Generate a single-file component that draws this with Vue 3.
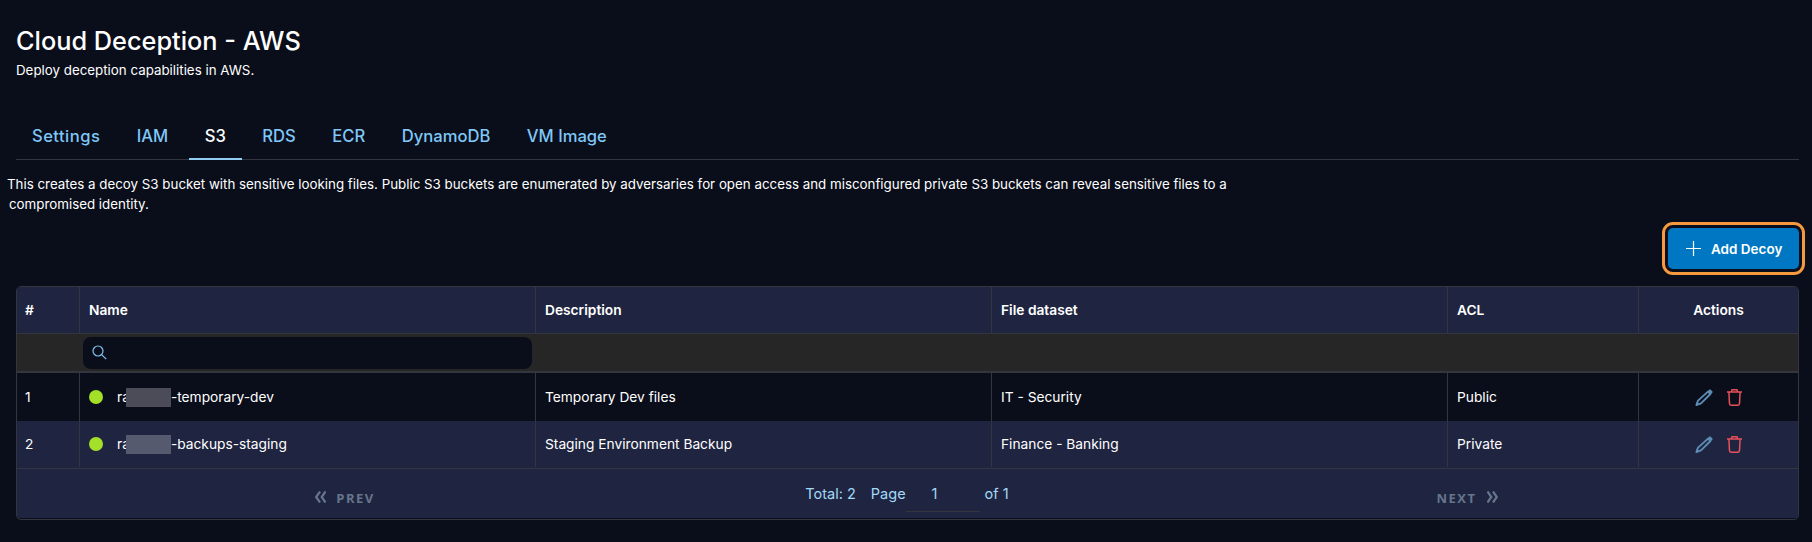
<script setup>
const tabs = ['Settings', 'IAM', 'S3', 'RDS', 'ECR', 'DynamoDB', 'VM Image']
const headers = ['#', 'Name', 'Description', 'File dataset', 'ACL', 'Actions']
const rows = [
  { id: 1, pre: 'ra', name: '-temporary-dev', desc: 'Temporary Dev files', data: 'IT - Security', acl: 'Public' },
  { id: 2, pre: 'ra', name: '-backups-staging', desc: 'Staging Environment Backup', data: 'Finance - Banking', acl: 'Private' }
]
</script>

<template>
  <div class="page">
    <header class="head">
      <h1>Cloud Deception - AWS</h1>
      <p>Deploy deception capabilities in AWS.</p>
    </header>
    <nav class="tabs">
      <a v-for="t in tabs" :key="t" class="tab" :class="{ active: t === 'S3' }">{{ t }}</a>
    </nav>
    <p class="intro">This creates a decoy S3 bucket with sensitive looking files. Public S3 buckets are enumerated by adversaries for open access and misconfigured private S3 buckets can reveal sensitive files to a<br><span class="indent">compromised identity.</span></p>
    <div class="toolbar">
      <button class="add">
        <svg width="15" height="15" viewBox="0 0 15 15" fill="none" stroke="#fff" stroke-width="1.2"><path d="M7.5 0v15M0 7.5h15"/></svg>
        <span>Add Decoy</span>
      </button>
    </div>
    <section class="table">
      <div class="row hrow">
        <div v-for="h in headers" :key="h" class="cell th" :class="{ center: h === 'Actions' }">{{ h }}</div>
      </div>
      <div class="row frow">
        <div class="cell blank"></div>
        <div class="cell fcell">
          <div class="search">
            <svg width="15" height="15" viewBox="0 0 15 15" fill="none" stroke="#7ec4f0" stroke-width="1.2"><circle cx="6" cy="6" r="5"/><path d="M9.6 9.6 14.2 14.2"/></svg>
          </div>
        </div>
        <div class="cell blank wide"></div>
      </div>
      <div v-for="r in rows" :key="r.id" class="row drow" :class="{ alt: r.id === 2 }">
        <div class="cell">{{ r.id }}</div>
        <div class="cell namecell">
          <i class="dot"></i>
          <span>{{ r.pre }}<b class="redact"></b>{{ r.name }}</span>
        </div>
        <div class="cell">{{ r.desc }}</div>
        <div class="cell">{{ r.data }}</div>
        <div class="cell">{{ r.acl }}</div>
        <div class="cell actions">
          <svg width="18" height="17" viewBox="0 0 18 17" fill="none"><path d="M13 2.6 15.4 5 6 14.4 1.4 16 3 11.600Z" stroke="#5d8cb3" stroke-width="1.9" stroke-linejoin="round"/><path d="M12.4 2.6 13.9.9c.6-.6 1.4-.6 2 0l1.2 1.200c.6.6.6 1.300 0 1.900L15.400 5.600Z" fill="#5d8cb3"/><path d="M.8 16.400 1.800 13l2.400 2.400Z" fill="#5d8cb3"/></svg>
          <svg width="15" height="17" viewBox="0 0 15 17" fill="none" stroke="#e8505a" stroke-width="1.5" stroke-linejoin="round"><path d="M0 3h15"/><path d="M4.600 3V1.800c0-.6.5-1.100 1.100-1.100h3.600c.6 0 1.100.5 1.100 1.100V3"/><path d="M1.900 3 2.500 14.600c0 .9.7 1.600 1.600 1.600h6.800c.9 0 1.600-.7 1.600-1.600L13.100 3"/></svg>
        </div>
      </div>
      <footer class="foot">
        <div class="nav">
          <svg width="11" height="12" viewBox="0 0 11 12" fill="none" stroke="#66758a" stroke-width="2.2"><path d="M5 .5 1.200 6 5 11.500M10.500.5 6.700 6l3.800 5.500"/></svg>
          <span>PREV</span>
        </div>
        <div class="pager">
          <span>Total: 2</span>
          <span class="pg">Page</span>
          <span class="num">1</span>
          <span>of 1</span>
        </div>
        <div class="nav">
          <span>NEXT</span>
          <svg width="11" height="12" viewBox="0 0 11 12" fill="none" stroke="#66758a" stroke-width="2.2"><path d="M.5.5 4.300 6 .5 11.500M6 .5 9.800 6 6 11.500"/></svg>
        </div>
      </footer>
    </section>
  </div>
</template>

<style>
html, body { margin: 0; background: #0a0e1a; }
</style>

<style scoped>
.page {
  height: 542px;
  box-sizing: border-box;
  background: #0a0e1a;
  color: #fff;
  font-family: Inter, "Noto Sans", sans-serif;
  padding: 25px 13px 0 16px;
  overflow: hidden;
}
.head h1 { margin: 0; font-size: 25.3px; line-height: 32px; font-weight: 500; }
.head p { margin: 4px 0 0; font-size: 13.33px; line-height: 18px; }
.tabs {
  display: flex;
  gap: 4.5px;
  margin-top: 39px;
  height: 42px;
  box-sizing: border-box;
  border-bottom: 1px solid #33363f;
}
.tab {
  padding: 0 16px;
  font-size: 16.6px;
  font-weight: 500;
  line-height: 36px;
  height: 42px;
  box-sizing: border-box;
  color: #7fc8f8;
}
.tab:first-child { letter-spacing: 0.45px; }
.tab.active { color: #fff; border-bottom: 2px solid #90cdf4; }
.intro { margin: 14px 0 0 -9px; font-size: 13.33px; line-height: 20px; }
.indent { margin-left: 2px; }
.toolbar { display: flex; justify-content: flex-end; margin-top: 14px; }
.add {
  display: flex;
  align-items: center;
  gap: 10px;
  width: 131px;
  height: 41px;
  padding: 0 0 0 18px;
  box-sizing: border-box;
  border: 0;
  border-radius: 5px;
  background: #0077c2;
  color: #fff;
  font: 600 13.5px Inter, sans-serif;
  outline: 3px solid #f6993f;
  outline-offset: 3px;
}
.table {
  margin-top: 17px;
  height: 234px;
  box-sizing: border-box;
  border: 1px solid #33363f;
  border-radius: 5px;
  overflow: hidden;
  font-size: 13.75px;
}
.row {
  display: grid;
  grid-template-columns: 63px 456px 456px 456px 191px 1fr;
  box-sizing: border-box;
  border-bottom: 1px solid #33363f;
}
.cell {
  display: flex;
  align-items: center;
  padding: 0 9px;
  border-right: 1px solid #33363f;
  min-width: 0;
}
.cell:first-child { padding-left: 8px; }
.cell:last-child { border-right: 0; }
.hrow { height: 47px; background: #1f2540; }
.th { font-weight: 600; }
.center { justify-content: center; }
.frow { height: 39px; background: #262626; border-bottom-width: 2px; }
.blank { border-right: 0; }
.wide { grid-column: 3 / -1; }
.fcell { padding: 0 4px 0 3px; border-right: 0; }
.search {
  display: flex;
  align-items: center;
  width: 100%;
  height: 32px;
  padding-left: 9px;
  box-sizing: border-box;
  border-radius: 8px;
  background: #0a0e1a;
}
.drow { height: 48px; background: #0a0e1a; border-bottom: 0; }
.drow.alt { background: #1f2540; border-bottom: 1px solid #33363f; padding-bottom: 1px; }
.namecell { gap: 14px; }
.dot { width: 14px; height: 14px; border-radius: 50%; background: #a3e02a; flex: none; }
.redact {
  display: inline-block;
  width: 45px;
  height: 19px;
  margin: -4px 0 -4px -4px;
  vertical-align: -1px;
  background: #4c4c58;
}
.alt .redact { background: #555a6e; }
.actions { justify-content: center; gap: 14px; }
.foot {
  display: grid;
  grid-template-columns: 656px 1fr 662px;
  align-items: center;
  height: 49px;
  background: #1f2540;
}
.nav {
  display: flex;
  align-items: center;
  gap: 10px;
  font-family: "Open Sans", sans-serif;
  font-weight: 700;
  font-size: 13px;
  letter-spacing: 1.5px;
  color: #66758a;
  justify-content: center;
  padding-top: 9px;
}
.nav svg { margin-top: -3px; }
.pager {
  display: flex;
  align-items: center;
  justify-content: center;
  font-size: 14.5px;
  padding-left: 5px;
  color: #a3d8f8;
}
.pg { margin-left: 15px; }
.num {
  width: 74px;
  height: 37px;
  line-height: 37px;
  padding-left: 26px;
  box-sizing: border-box;
  border-bottom: 1px solid #33363f;
  margin-right: 5px;
}
</style>
